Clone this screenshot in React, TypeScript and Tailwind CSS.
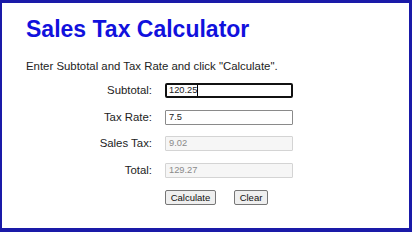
import React from "react";

const font = { fontFamily: '"Liberation Sans", Arial, sans-serif' };

function Field({
  label,
  value,
  kind,
}: {
  label: string;
  value: string;
  kind: "focus" | "normal" | "disabled";
}) {
  const box =
    kind === "focus"
      ? "border-2 border-[#111] rounded-[2px] pl-[2px] bg-white text-[#222]"
      : kind === "normal"
      ? "border border-[#8a8a8a] rounded-[1px] pl-[3px] bg-white text-[#222]"
      : "border border-[#d4d4d4] rounded-[1px] pl-[3px] bg-[#f6f6f6] text-[#8a8a8a]";
  return (
    <div className="flex items-center h-[15px]">
      <div className="w-[150px] text-right text-[11.4px] leading-[15px] text-[#222]">
        {label}
      </div>
      <div
        className={`ml-[13px] w-[128px] h-[15px] box-border flex items-center text-[9.3px] leading-[11px] ${box}`}
      >
        <span>{value}</span>
        {kind === "focus" && <span className="inline-block w-px h-[11px] bg-black" />}
      </div>
    </div>
  );
}

export default function App() {
  return (
    <div
      style={font}
      className="w-[412px] h-[232px] box-border bg-white border-solid border-[#1a1aa8] border-t-[3px] border-l-[2px] border-r-[3px] border-b-[4px] overflow-hidden"
    >
      <h1 className="pl-[24px] pt-[13px] text-[23px] leading-[26px] font-bold text-[#1111dd]">
        Sales Tax Calculator
      </h1>
      <p className="pl-[24px] mt-[17px] text-[11.4px] leading-[14px] text-[#222]">
        Enter Subtotal and Tax Rate and click "Calculate".
      </p>
      <div className="mt-[10px] flex flex-col gap-[11.7px]">
        <Field label="Subtotal:" value="120.25" kind="focus" />
        <Field label="Tax Rate:" value="7.5" kind="normal" />
        <Field label="Sales Tax:" value="9.02" kind="disabled" />
        <Field label="Total:" value="129.27" kind="disabled" />
      </div>
      <div className="mt-[12px] flex gap-[18px] pl-[163px]">
        <button className="h-[15px] w-[51px] box-border border border-[#767676] rounded-[2px] bg-[#efefef] text-[9.5px] leading-[13px] text-[#111]">
          Calculate
        </button>
        <button className="h-[15px] w-[34px] box-border border border-[#767676] rounded-[2px] bg-[#efefef] text-[9.5px] leading-[13px] text-[#111]">
          Clear
        </button>
      </div>
    </div>
  );
}
